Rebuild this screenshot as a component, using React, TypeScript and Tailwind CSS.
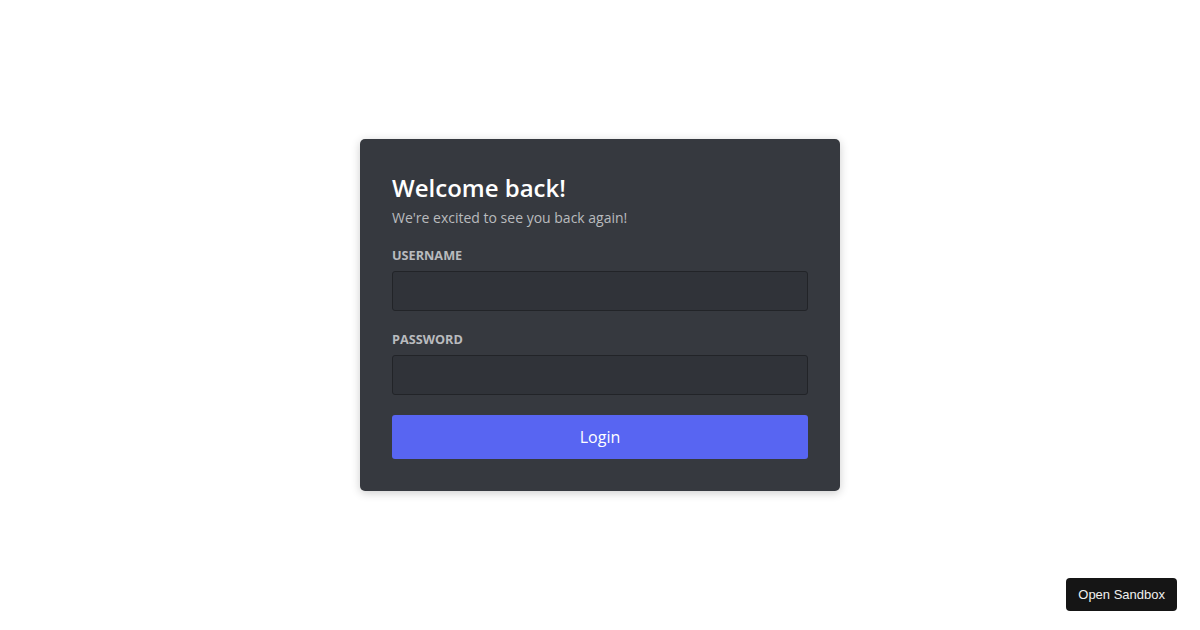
export default function App() {
  return (
    <div className="relative w-full h-[630px] bg-white flex items-center justify-center" style={{ fontFamily: '"Open Sans", sans-serif' }}>
      <div className="w-[480px] bg-[#36393f] rounded-[5px] p-8 shadow-[0_2px_10px_0_rgba(0,0,0,0.2)] flex flex-col">
        <h1 className="text-[24px] leading-[34px] font-semibold text-white">Welcome back!</h1>
        <p className="mt-[3px] text-[14px] leading-[20px] text-[#b9bbbe]">We're excited to see you back again!</p>
        <label className="mt-[19px] text-[12.7px] leading-[16px] font-bold text-[#b9bbbe] uppercase">Username</label>
        <input className="mt-2 h-10 rounded-[3px] bg-[#303339] border border-[#222428] outline-none" />
        <label className="mt-5 text-[12.7px] leading-[16px] font-bold text-[#b9bbbe] uppercase">Password</label>
        <input type="password" className="mt-2 h-10 rounded-[3px] bg-[#303339] border border-[#222428] outline-none" />
        <button className="mt-5 h-11 rounded-[3px] bg-[#5865f2] text-white text-[16px]">Login</button>
      </div>
      <div className="absolute right-[23px] bottom-[19px] h-[33px] px-[12px] rounded-[4px] bg-[#151515] text-[#f0f0f0] text-[13px] flex items-center" style={{ fontFamily: '"Liberation Sans", Arial, sans-serif' }}>
        Open Sandbox
      </div>
    </div>
  );
}
